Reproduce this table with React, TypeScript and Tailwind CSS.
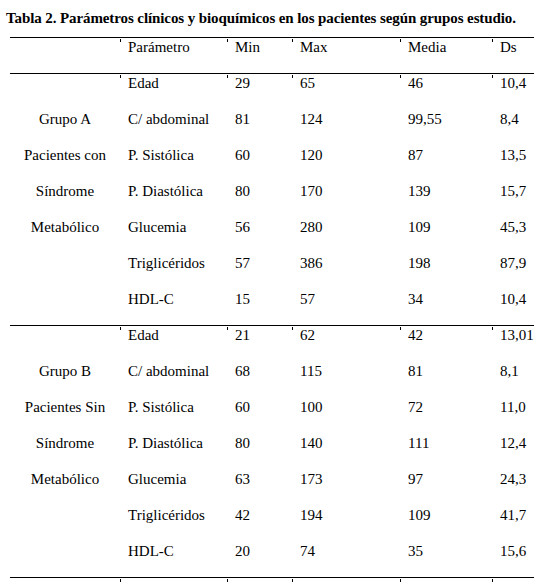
const cols = "grid grid-cols-[110px_107px_65px_108px_92px_70px]";

type Row = [string, string, string, string, string, string];

const groupA: Row[] = [
  ["", "Edad", "29", "65", "46", "10,4"],
  ["Grupo A", "C/ abdominal", "81", "124", "99,55", "8,4"],
  ["Pacientes con", "P. Sistólica", "60", "120", "87", "13,5"],
  ["Síndrome", "P. Diastólica", "80", "170", "139", "15,7"],
  ["Metabólico", "Glucemia", "56", "280", "109", "45,3"],
  ["", "Triglicéridos", "57", "386", "198", "87,9"],
  ["", "HDL-C", "15", "57", "34", "10,4"],
];

const groupB: Row[] = [
  ["", "Edad", "21", "62", "42", "13,01"],
  ["Grupo B", "C/ abdominal", "68", "115", "81", "8,1"],
  ["Pacientes Sin", "P. Sistólica", "60", "100", "72", "11,0"],
  ["Síndrome", "P. Diastólica", "80", "140", "111", "12,4"],
  ["Metabólico", "Glucemia", "63", "173", "97", "24,3"],
  ["", "Triglicéridos", "42", "194", "109", "41,7"],
  ["", "HDL-C", "20", "74", "35", "15,6"],
];

function TableRow({ row, ruled }: { row: Row; ruled?: boolean }) {
  return (
    <div
      className={`${cols} h-[36px] ${ruled ? "border-t border-black" : ""}`}
    >
      <div className="pt-[2px] text-center">{row[0]}</div>
      {row.slice(1).map((cell, i) => (
        <div key={i} className="pt-[1px]">
          {ruled ? (
            <div className="-mb-[3px] h-[3px] w-px bg-black" />
          ) : (
            <div className="h-px" />
          )}
          <div className="pl-[8px]">{cell}</div>
        </div>
      ))}
    </div>
  );
}

export default function App() {
  return (
    <div className="h-[585px] w-[534px] overflow-hidden bg-white font-['Liberation_Serif'] text-[15px] leading-[17px] text-black">
      <h1 className="h-[37px] whitespace-nowrap pl-[6px] pt-[10px] text-[15px] font-bold tracking-[-0.1px]">
        Tabla 2. Parámetros clínicos y bioquímicos en los pacientes según
        grupos estudio.
      </h1>
      <div className="ml-[10px] w-[560px]">
        <TableRow row={["", "Parámetro", "Min", "Max", "Media", "Ds"]} ruled />
        {groupA.map((row, i) => (
          <TableRow key={"a" + i} row={row} ruled={i === 0} />
        ))}
        {groupB.map((row, i) => (
          <TableRow key={"b" + i} row={row} ruled={i === 0} />
        ))}
        <TableRow row={["", "", "", "", "", ""]} ruled />
      </div>
    </div>
  );
}
